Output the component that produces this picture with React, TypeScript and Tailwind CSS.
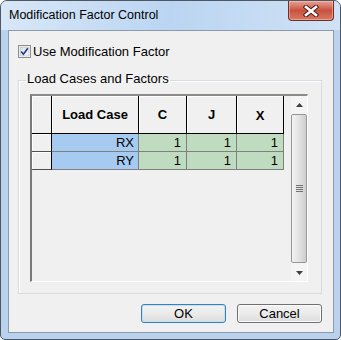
import React from 'react';

const font = { fontFamily: '"Liberation Sans", Arial, sans-serif' };

const cols = [
  { key: 'C', w: 'w-[48px]' },
  { key: 'J', w: 'w-[50px]' },
  { key: 'X', w: 'w-[47px]' },
];

const rows = [
  { name: 'RX', values: [1, 1, 1] },
  { name: 'RY', values: [1, 1, 1] },
];

function CheckBox() {
  return (
    <svg width="13" height="13" viewBox="0 0 13 13" className="shrink-0">
      <defs>
        <linearGradient id="cbg" x1="0" y1="0" x2="1" y2="1">
          <stop offset="0" stopColor="#d9dee6" />
          <stop offset="1" stopColor="#f7f8fa" />
        </linearGradient>
      </defs>
      <rect x="0.5" y="0.5" width="12" height="12" fill="#fff" stroke="#8e8f8f" />
      <rect x="2" y="2" width="9" height="9" fill="url(#cbg)" stroke="#aeb3b9" strokeWidth="0.6" />
      <path d="M3.2 6.6 L5.4 9.3 L9.8 3.2" fill="none" stroke="#21398f" strokeWidth="1.6" />
    </svg>
  );
}

function CloseButton() {
  return (
    <div className="ml-auto flex h-[20px] w-[46px] items-center justify-center rounded-b-[4px] border border-t-0 border-[#6e2f28] bg-gradient-to-b from-[#e6a295] via-[#c9503f] to-[#da7a62] shadow-[inset_0_0_0_1px_rgba(255,210,200,0.45)]">
      <svg width="16" height="12" viewBox="0 0 16 12">
        <path d="M3 2 L13 10 M13 2 L3 10" stroke="#4a1f1a" strokeWidth="4.6" strokeLinecap="square" />
        <path d="M3 2 L13 10 M13 2 L3 10" stroke="#fff" strokeWidth="2.6" strokeLinecap="square" />
      </svg>
    </div>
  );
}

function ScrollBar() {
  return (
    <div className="flex h-full w-[16px] flex-col bg-[#f4f4f4]">
      <div className="flex h-[17px] items-center justify-center">
        <svg width="7" height="4" viewBox="0 0 7 4">
          <path d="M0 4 L3.5 0 L7 4 Z" fill="#3f3f3f" />
        </svg>
      </div>
      <div className="my-[1px] flex flex-1 items-center justify-center rounded-[2px] border border-[#979797] bg-gradient-to-r from-[#f3f3f3] via-[#e3e3e3] to-[#cdcdcd]">
        <div className="flex flex-col gap-[1px]">
          <div className="h-[1px] w-[7px] bg-[#707070]" />
          <div className="h-[1px] w-[7px] bg-[#707070]" />
          <div className="h-[1px] w-[7px] bg-[#707070]" />
          <div className="h-[1px] w-[7px] bg-[#707070]" />
        </div>
      </div>
      <div className="flex h-[17px] items-center justify-center">
        <svg width="7" height="4" viewBox="0 0 7 4">
          <path d="M0 0 L3.5 4 L7 0 Z" fill="#3f3f3f" />
        </svg>
      </div>
    </div>
  );
}

function Grid() {
  const headCell =
    'flex items-center justify-center border-r border-b border-black bg-[#f0f0f0] shadow-[inset_1px_1px_0_#ffffff] font-bold text-[13px] text-black';
  return (
    <div className="ml-[11px] mt-[5px] flex h-[188px] w-[278px] gap-[7px] border-l-2 border-t-2 border-r border-b border-l-[#7a7a7a] border-t-[#8a8a8a] border-r-white border-b-white bg-[#f0f0f0]">
      <div className="flex w-[252px] flex-col">
        <div className="flex h-[38px]">
          <div className={`${headCell} w-[20px]`} />
          <div className={`${headCell} w-[87px]`}>Load Case</div>
          {cols.map((c) => (
            <div key={c.key} className={`${headCell} ${c.w}`}>
              <span className={c.key === 'X' ? 'mt-[3px]' : ''}>{c.key}</span>
            </div>
          ))}
        </div>
        {rows.map((r) => (
          <div key={r.name} className="flex h-[18px] text-[13px] leading-[17px]">
            <div className="w-[20px] border-r border-b border-r-black border-b-[#505050] bg-[#f0f0f0] shadow-[inset_1px_1px_0_#ffffff]" />
            <div className="w-[87px] border-r border-b border-[#7f7f7f] bg-[#a6caf0] pr-[4px] text-right">
              {r.name}
            </div>
            {r.values.map((v, i) => (
              <div
                key={i}
                className={`${cols[i].w} border-r border-b border-[#7f7f7f] bg-[#c0dcc0] pr-[5px] text-right`}
              >
                {v}
              </div>
            ))}
          </div>
        ))}
      </div>
      <ScrollBar />
    </div>
  );
}

export default function App() {
  return (
    <div className="h-[340px] w-[341px] overflow-hidden bg-white text-black" style={font}>
      <div className="flex h-full w-full flex-col rounded-t-[7px] rounded-b-[5px] border border-[#4f5762] bg-[#b9d3ef]">
        <div className="flex h-[29px] items-start rounded-t-[6px] bg-gradient-to-r from-[#d8e7f7] via-[#bad5f2] to-[#d0e2f5] pr-[6px]">
          <span className="pl-[8px] pt-[7px] text-[12.5px] leading-[15px] text-black">
            Modification Factor Control
          </span>
          <CloseButton />
        </div>
        <div className="mb-[6px] ml-[7px] mr-[6px] flex flex-1 flex-col border border-[#8d9aab] bg-[#f0f0f0]">
          <div className="ml-[9px] mt-[14px] flex h-[13px] items-center gap-[2px]">
            <CheckBox />
            <span className="text-[13px] leading-[13px]">Use Modification Factor</span>
          </div>
          <fieldset className="ml-[9px] mt-[13px] h-[223px] w-[304px] border border-[#d5dbe1] shadow-[inset_1px_1px_0_#ffffff]">
            <legend className="ml-[7px] px-[1px] pb-[3px] text-[13px] leading-[15px]">Load Cases and Factors</legend>
            <Grid />
          </fieldset>
          <div className="mr-[11px] mt-[10px] flex justify-end gap-[11px] text-[13px]">
            <button className="flex h-[19px] w-[85px] items-center justify-center rounded-[3px] border border-[#3c7fb1] bg-gradient-to-b from-[#f2f2f2] via-[#ebebeb] to-[#dcdcdc] shadow-[inset_0_0_0_1px_#bfe2f5]">
              OK
            </button>
            <button className="flex h-[19px] w-[85px] items-center justify-center rounded-[3px] border border-[#707070] bg-gradient-to-b from-[#f2f2f2] via-[#ebebeb] to-[#dcdcdc] shadow-[inset_0_0_0_1px_#fbfbfb]">
              Cancel
            </button>
          </div>
        </div>
      </div>
    </div>
  );
}
